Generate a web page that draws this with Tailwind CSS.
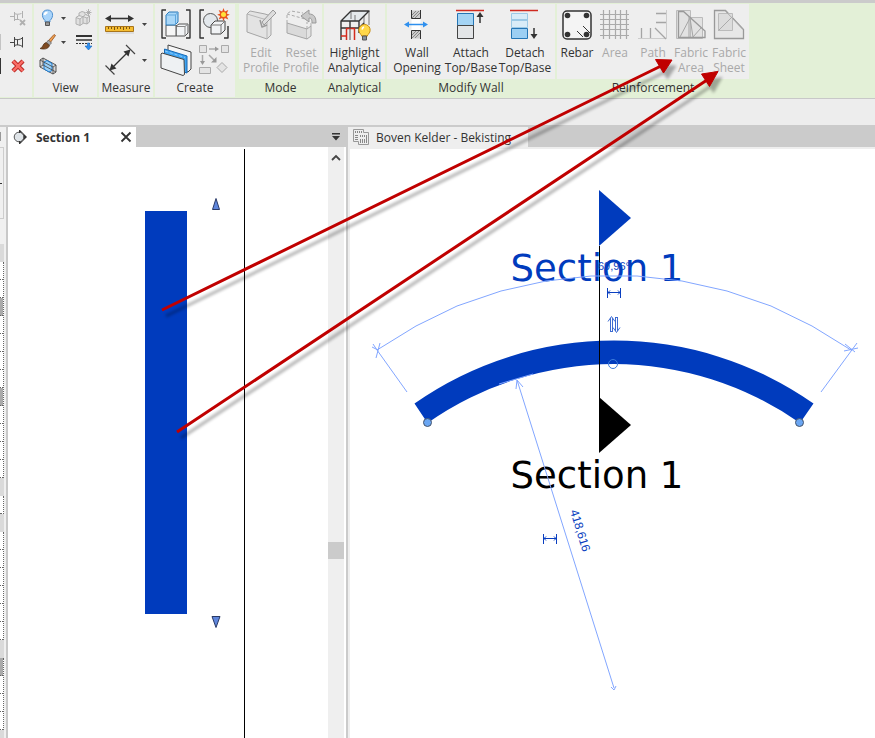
<!DOCTYPE html>
<html lang="en">
<head>
    <meta charset="utf-8">
    <meta name="viewport" content="width=device-width, initial-scale=1">
    <title>Section 1</title>
    <script src="https://cdn.jsdelivr.net/npm/@tailwindcss/browser@4"></script>
</head>
<body class="relative flex min-h-screen flex-col overflow-x-hidden bg-white font-['Open_Sans',sans-serif] text-[12px] leading-[15px] text-[#333]">

    <!-- Ribbon -->
    <header class="flex gap-[2px] overflow-hidden border-t-[3px] border-b border-t-[#cbcbcb] border-b-[#c8c8c8] bg-[#e3f0d7] py-px">

        <!-- Clipboard / pin, cut off on the left -->
        <section class="flex w-8 shrink-0 bg-[#eee] pt-[2px]">
            <div class="flex w-[2px] flex-col pt-7">
                <div class="h-4 w-px bg-[#c4c4c4]"></div>
                <div class="mt-2 h-4 w-px bg-[#333]"></div>
            </div>
            <div class="flex flex-col pl-[8px]">
                <button class="flex h-6 items-center" aria-label="Unpin" disabled>
                    <svg width="17" height="16" viewBox="0 0 17 16" fill="none" stroke="#b0b0b0"><path d="M0 6.500H4M4.500 2v9M4.500 3.500c2 1 4 1 7 0M4.500 9.500h5M12.500 1v7M7.500 4.500v4.500"/><path stroke-width="1.800" d="M10 10l5 5M15 10l-5 5"/></svg>
                </button>
                <button class="flex h-6 items-center" aria-label="Pin">
                    <svg width="16" height="16" viewBox="0 0 16 16" fill="none" stroke="#444"><path d="M0 8.500h4M4.500 3v10M4.500 5c2 1 5 1 8 -1M4.500 11.500c2-1 5-1 8 1M12.500 3v10.500M7.500 6v5"/></svg>
                </button>
                <button class="flex h-6 items-center" aria-label="Delete">
                    <svg width="16" height="16" viewBox="0 0 16 16" fill="none"><path d="M3 3l10 10M13 3L3 13" stroke="#b8231f" stroke-width="4.400"/><path d="M3.200 3.200l9.600 9.600M12.800 3.200l-9.600 9.600" stroke="#fa6d66" stroke-width="2.400"/></svg>
                </button>
            </div>
        </section>

        <section class="flex w-[63px] shrink-0 flex-col bg-[#eee]">
            <div class="flex h-[75px] pt-[2px] pl-[5px]">
                <div class="flex w-9 flex-col">
                    <button class="flex h-6 items-center gap-1" aria-label="Hide in view">
                        <svg width="18" height="18" viewBox="0 0 18 18"><path d="M6 11.500C2 8 2.500 1 8.500 1S15 8 11 11.500v1.500H6z" fill="#a9d4fa" stroke="#4d8fd0"/><path d="M5.500 6c.500-2.500 3-2.500 3-2.500" stroke="#fff" fill="none" stroke-width="2"/><path d="M6.500 13h4v3.500h-4z" fill="#999" stroke="#555"/></svg>
                        <svg width="6" height="3" viewBox="0 0 6 3"><path d="M0 0h5L2.500 3z" fill="#444"/></svg>
                    </button>
                    <button class="flex h-6 items-center gap-1" aria-label="Override graphics">
                        <svg width="18" height="18" viewBox="0 0 18 18"><path d="M9 8l6-6.500 1.500 1L11 10z" fill="#f0a050" stroke="#944f1d" stroke-width=".8"/><path d="M7.500 9.500L9.500 7l3 3-2 2z" fill="#aaa" stroke="#555" stroke-width=".7"/><path d="M1 15.500c3-.500 2.500-5 6-6l3.500 3c-1.500 4-6 4-9.500 3z" fill="#7e4a21" stroke="#482b14" stroke-width=".7"/></svg>
                        <svg width="6" height="3" viewBox="0 0 6 3"><path d="M0 0h5L2.500 3z" fill="#444"/></svg>
                    </button>
                    <button class="flex h-6 items-center" aria-label="Selection box">
                        <svg width="18" height="18" viewBox="0 0 18 18"><path d="M1 3l3-2 13 7v7l-3 2L1 10z" fill="#d9d9d9" stroke="#555"/><path d="M5 5l3-1.500 5 3v7l-3 1.500-5-3z" fill="#9ad0f7" stroke="#1d7ad0"/><path d="M1 3l13 7v7M14 10l3-2M4 1v7l-3 2M4 8l13 7" fill="none" stroke="#444" stroke-width=".8"/></svg>
                    </button>
                </div>
                <div class="flex flex-col">
                    <button class="flex h-6 items-center" aria-label="Displace elements" disabled>
                        <svg width="18" height="18" viewBox="0 0 18 18" fill="#e0e0e0" stroke="#aaa" stroke-width=".9"><path d="M1 8.500l3-2 4 1v7l-3 2-4-1.500zM1 8.500l4 1.500 3-2.500M5 10v6.500M8 7.500l2.500-2 4 1.500v6L12 15l-4-1M8 7.500l4 1.500 2.500-2M12 9v6M4 6.500V4l3-1.500 3 1v2"/><path d="M13.500 0v7M10.500 3.500h6M11.500 1.500l4 4M15.500 1.500l-4 4"/></svg>
                    </button>
                    <button class="flex h-6 items-center" aria-label="Linework">
                        <svg width="18" height="18" viewBox="0 0 18 18" fill="none"><path d="M1 3h16" stroke="#333" stroke-width="2"/><path d="M1 7h16" stroke="#333" stroke-width="1.500"/><path d="M1 10.500h16" stroke="#333" stroke-dasharray="2 1"/><path d="M12.500 10h2v3h2.500l-3.500 4-3.500-4h2.500z" fill="#2d8ff0" stroke="#1563b8" stroke-width=".6"/></svg>
                    </button>
                </div>
            </div>
            <h2 class="h-[18px] text-center leading-[18px]">View</h2>
        </section>

        <section class="flex w-[54px] shrink-0 flex-col bg-[#eee]">
            <div class="flex h-[75px] flex-col pt-[2px] pl-[5px]">
                <button class="flex h-9 items-center gap-[6px]" aria-label="Measure">
                    <svg width="32" height="32" viewBox="0 0 32 32"><path d="M5 10.500h22" stroke="#333" stroke-width="1.600"/><path d="M1 10.500l6-3.500v7zM30 10.500L24 7v7z" fill="#333"/><path d="M1.500 18.500h28v5h-28z" fill="#f5bd31" stroke="#a8741a"/><path d="M4.500 19v2M7.500 19v2M10.500 19v3M13.500 19v2M16.500 19v2M19.500 19v3M22.500 19v2M25.500 19v2" stroke="#7d5510"/><path d="M2 25h28" stroke="#ccc"/></svg>
                    <svg width="6" height="3" viewBox="0 0 6 3"><path d="M0 0h5L2.500 3z" fill="#444"/></svg>
                </button>
                <button class="flex h-9 items-center gap-[6px]" aria-label="Dimension">
                    <svg width="32" height="32" viewBox="0 0 32 32"><path d="M8 24L25 7" stroke="#333" stroke-width="1.300"/><path d="M5.500 26.500l2-7 5 5zM26.500 5.500l-7 2 5 5z" fill="#333"/><path d="M1.500 21.500l9 9M22 1l9 9" stroke="#444" stroke-width="1.200"/></svg>
                    <svg width="6" height="3" viewBox="0 0 6 3"><path d="M0 0h5L2.500 3z" fill="#444"/></svg>
                </button>
            </div>
            <h2 class="h-[18px] text-center leading-[18px]">Measure</h2>
        </section>

        <section class="mr-[2px] flex w-20 shrink-0 flex-col bg-[#eee]">
            <div class="grid h-[75px] grid-cols-[38px_32px] grid-rows-[36px_36px] items-center pt-[2px] pl-[5px]">
                <button aria-label="Create assembly">
                    <svg width="32" height="32" viewBox="0 0 32 32" stroke-linejoin="round"><path d="M6 2H2v28h4M26 2h4v28h-4" fill="none" stroke="#333" stroke-width="1.400"/><path d="M16 18l3-2h9v9l-3 3h-9z" fill="#f2f4f6" stroke="#555"/><path d="M16 18.500h9v9M25 18.500l3-2.500" fill="none" stroke="#888"/><path d="M6 17h10v11H6z" fill="#f6f6f6" stroke="#555"/><path d="M6 7l3-3h9v10l-3 3H6z" fill="#a9d7f8" stroke="#2978b8"/><path d="M6 7h9.500v10M15.500 7L18 4" fill="none" stroke="#5ea6dc"/></svg>
                </button>
                <button aria-label="Create group">
                    <svg width="32" height="32" viewBox="0 0 32 32" stroke-linejoin="round"><path d="M6 2H2v28h4M30 18v12h-4" fill="none" stroke="#333" stroke-width="1.400"/><circle cx="12.500" cy="12.500" r="7" fill="#e3e8ec" stroke="#555"/><path d="M13 17l4-4h10v9l-4 4H13z" fill="#f0f2f4" stroke="#444"/><path d="M13 17h10v9M23 17l4-4" fill="none" stroke="#777"/><path d="M25.500 0l1.300 3.500 3.500-1.500-1.500 3.500 3 1.200-3 1.300 1.500 3.500-3.500-1.500-1.300 3-1.300-3-3.500 1.500 1.500-3.500-3-1.300 3-1.200L20.700 2l3.500 1.500z" fill="#e8531d"/><circle cx="25.500" cy="6.500" r="2.500" fill="#ffe13b"/></svg>
                </button>
                <button aria-label="Create parts">
                    <svg width="32" height="32" viewBox="0 0 32 32" stroke-linejoin="round"><path d="M8 1l23 7v17l-3 3L8 20z" fill="#f6f6f6" stroke="#444"/><path d="M4.500 5L27 12v17L4.500 22z" fill="#3fa4f1" stroke="#1769b5"/><path d="M1 10l1-1 22 6.500.500 15-1.500 1L1 24z" fill="#eef1f3" stroke="#444"/><path d="M5 7l20 6.500" stroke="#8ccbfa" stroke-dasharray="3 2"/></svg>
                </button>
                <button aria-label="Create similar" disabled>
                    <svg width="32" height="32" viewBox="0 0 32 32" fill="#e4e4e4" stroke="#aaa"><path d="M1.500 1.500h7v7h-7zM23.500 1.500h7v7h-7zM1.500 23.500h11v6h-11zM19 23.500l5-5 5 5-5 5z"/><path d="M11 5h8M4.500 11v8M11 11l5 5" stroke-width="1.500"/><path d="M17 2.500l4 2.500-4 2.500zM2 17h5l-2.500 4zM18.500 13v5.500H13z" fill="#999" stroke="none"/></svg>
                </button>
            </div>
            <h2 class="h-[18px] text-center leading-[18px]">Create</h2>
        </section>

        <!-- Contextual panels -->
        <section class="flex w-[83px] shrink-0 flex-col">
            <div class="flex h-[75px] bg-[#eee] pl-[2px] text-[#a9a9a9]">
                <button class="flex w-10 flex-col items-center gap-1 pt-[5px]" disabled>
                    <svg class="shrink-0" width="32" height="32" viewBox="0 0 32 32" stroke-linejoin="round"><path d="M2 5l3-3 15 3 6 2v19l-4 4L2 23z" fill="#e3e3e3" stroke="#a5a5a5"/><path d="M2 5l20 6v19M22 11l4-4" fill="none" stroke="#b5b5b5"/><path d="M17 13L28 1l3 3-12 12z" fill="#ddd" stroke="#999"/><path d="M15 11l2 7 5-2" fill="none" stroke="#999" stroke-width="1.500"/></svg>
                    <span>Edit<br>Profile</span>
                </button>
                <button class="flex w-10 flex-col items-center gap-1 pt-[5px]" disabled>
                    <svg class="shrink-0" width="32" height="32" viewBox="0 0 32 32" stroke-linejoin="round"><path d="M2 14l20 6v10L2 24z" fill="#dadada" stroke="#a5a5a5"/><path d="M22 20l4-3v10l-4 3" fill="#e3e3e3" stroke="#a5a5a5"/><path d="M2 14V5l4-3 12 2M2 5l18 5M22 20v-7M26 17v-3" fill="none" stroke="#aaa" stroke-dasharray="3 2"/><path d="M16 7l8-6v4c5 0 7 3 7 9h-4c0-4-1-5-3-5v4z" fill="#c9c9c9" stroke="#999"/></svg>
                    <span>Reset<br>Profile</span>
                </button>
            </div>
            <h2 class="h-[18px] text-center leading-[18px]">Mode</h2>
        </section>

        <section class="flex w-[61px] shrink-0 flex-col">
            <div class="flex h-[75px] justify-center bg-[#eee]">
                <button class="flex w-[60px] flex-col items-center gap-1 pt-[5px]">
                    <svg class="shrink-0" width="32" height="32" viewBox="0 0 32 32" stroke-linejoin="round"><path d="M2 12L12 2h18L20 12z" fill="#e4e9ec"/><path d="M12 2v8M30 2v14M16 6v6M25 7v8" fill="none" stroke="#777"/><path d="M2 31V12L12 2h18L20 12v12M2 12h18M2 19h18M11 12v7M20 12v7l5-5" fill="none" stroke="#333" stroke-width="1.400"/><path d="M7.500 31V19.500M15.500 31V19.500M2 27h5M7 19.500h9" fill="none" stroke="#d32b1e" stroke-width="1.500"/><path d="M11 19v12" stroke="#555"/><path d="M22.500 26c-4.500-3-3-10.500 3-10.500s7.500 7.500 3 10.500v1h-6z" fill="#ffd84a" stroke="#c78d11"/><path d="M23.500 27h4v4h-4z" fill="#8a949c" stroke="#555"/><path d="M23 20.500c.500-2 2-2.500 2-2.500" fill="none" stroke="#fff" stroke-width="1.500"/></svg>
                    <span>Highlight<br>Analytical</span>
                </button>
            </div>
            <h2 class="h-[18px] text-center leading-[18px]">Analytical</h2>
        </section>

        <section class="flex w-[168px] shrink-0 flex-col">
            <div class="flex h-[75px] justify-center bg-[#eee]">
                <button class="flex w-[54px] flex-col items-center gap-1 pt-[5px]">
                    <svg class="shrink-0" width="32" height="32" viewBox="0 0 32 32"><path d="M10.500 1.500h9v8h-9zM10.500 21.500h9v8h-9z" fill="#ccc"/><path d="M11 6l4-4M11 9l7-7M14 9l5-5M11 26l4-4M11 29l7-7M14 29l5-5" stroke="#888"/><path d="M10.500 10h9v11h-9z" fill="#fff"/><path d="M10.500 1v8.500h9V1M10.500 30v-8.500h9V30" fill="none" stroke="#333"/><path d="M6 15.500h18" stroke="#2f90ee" stroke-width="1.500"/><path d="M3 15.500l5-3v6zM27 15.500l-5-3v6z" fill="#2f90ee"/></svg>
                    <span>Wall<br>Opening</span>
                </button>
                <button class="flex w-[54px] flex-col items-center gap-1 pt-[5px]">
                    <svg class="shrink-0" width="32" height="32" viewBox="0 0 32 32"><path d="M1 1.500h28" stroke="#cf2a20" stroke-width="1.500"/><path d="M2.500 4.500h16v12h-16z" fill="#a4d4f5" stroke="#2475b5"/><path d="M2.500 16.500h16v13h-16z" fill="#e3e5e7" stroke="#444"/><path d="M25 14V6" stroke="#333" stroke-width="1.500"/><path d="M21.500 8L25 3l3.500 5z" fill="#333"/></svg>
                    <span>Attach<br>Top/Base</span>
                </button>
                <button class="flex w-[54px] flex-col items-center gap-1 pt-[5px]">
                    <svg class="shrink-0" width="32" height="32" viewBox="0 0 32 32"><path d="M1 1.500h28" stroke="#cf2a20" stroke-width="1.500"/><path d="M2.500 4.500h16v7h-16zM2.500 10.500h16v8h-16z" fill="#d9ecf8" stroke="#9cc9e6"/><path d="M2.500 19.500h16v10h-16z" fill="#9ccff3" stroke="#2475b5"/><path d="M25 19v8" stroke="#333" stroke-width="1.500"/><path d="M21.500 25l3.500 5 3.500-5z" fill="#333"/></svg>
                    <span>Detach<br>Top/Base</span>
                </button>
            </div>
            <h2 class="h-[18px] text-center leading-[18px]">Modify Wall</h2>
        </section>

        <section class="flex w-[192px] shrink-0 flex-col">
            <div class="flex h-[75px] justify-center bg-[#eee] text-[#a9a9a9]">
                <button class="flex w-[38px] flex-col items-center gap-1 pt-[5px] text-[#333]">
                    <svg class="shrink-0" width="32" height="32" viewBox="0 0 32 32"><rect x="2" y="2" width="28" height="28" rx="4" fill="#f4f4f4" stroke="#333" stroke-width="1.500"/><g fill="#333"><circle cx="6.500" cy="6.500" r="2.800"/><circle cx="25.500" cy="6.500" r="2.800"/><circle cx="6.500" cy="25.500" r="2.800"/><circle cx="25.500" cy="25.500" r="2.800"/></g><path d="M16 22l6 6M22 17l7 7" stroke="#333"/></svg>
                    <span>Rebar</span>
                </button>
                <button class="flex w-[38px] flex-col items-center gap-1 pt-[5px]" disabled>
                    <svg class="shrink-0" width="32" height="32" viewBox="0 0 32 32" stroke="#aaa" stroke-width="1.200"><path d="M4.500 1v29M10.500 1v29M16.500 1v29M21.500 1v29M27.500 1v29M1 5.500h29M1 10.500h29M1 15.500h29M1 20.500h29M1 26.500h29"/></svg>
                    <span>Area</span>
                </button>
                <button class="flex w-[38px] flex-col items-center gap-1 pt-[5px]" disabled>
                    <svg class="shrink-0" width="32" height="32" viewBox="0 0 32 32" fill="none"><path d="M1 29.500h28.500V1" stroke="#ccc"/><path d="M4.500 29V19M13.500 29V19M29 4.500H19M29 13.500H19M18 19l11 11" stroke="#a5a5a5" stroke-width="1.300"/></svg>
                    <span>Path</span>
                </button>
                <button class="flex w-[38px] flex-col items-center gap-1 pt-[5px]" disabled>
                    <svg class="shrink-0" width="32" height="32" viewBox="0 0 32 32" fill="none"><path d="M1.500 1.500h14v28h-14zM15.500 8.500h12v21h-12z" fill="#e2e2e2" stroke="#bbb"/><path d="M3.500 28.500V2.500h5L30 22v6.500z" stroke="#999" stroke-width="1.300"/><path d="M5 28L15 9l3 19M14 8v20M18 28l8-9" stroke="#a5a5a5"/></svg>
                    <span>Fabric<br>Area</span>
                </button>
                <button class="flex w-[38px] flex-col items-center gap-1 pt-[5px]" disabled>
                    <svg class="shrink-0" width="32" height="32" viewBox="0 0 32 32" fill="none"><path d="M1.500 29.500v-28h11l18 19v9z" fill="#e7e7e7" stroke="#999" stroke-width="1.300"/><path d="M5.500 4.500h14v17h-14z" fill="#dcdcdc" stroke="#bbb"/><path d="M5.500 21.500l14-14M12 1.500l18 19" stroke="#aaa"/></svg>
                    <span>Fabric<br>Sheet</span>
                </button>
            </div>
            <h2 class="h-[18px] text-center leading-[18px]">Reinforcement</h2>
        </section>
    </header>

    <!-- Options bar -->
    <div class="h-[26px] shrink-0 bg-[#ededed]"></div>

    <main class="flex flex-1 border-t-2 border-[#cbcbcb]">

        <!-- Properties palette, only its right edge is on screen -->
        <aside class="flex w-2 shrink-0 flex-col border-r-2 border-[#c8c8c8] bg-[#f0f0f0]">
            <div class="h-5 pt-[5px]"><div class="h-[9px] w-px bg-[#999]"></div></div>
            <div class="flex h-[72px] w-1 items-center border-y border-r border-[#cdcdcd]"><span class="h-px w-[2px] bg-[#333]"></span></div>
            <div class="h-[25px]"></div>
            <div class="h-[18px] w-1 bg-[#dadada]"></div>
            <div class="flex w-1 flex-col border-r border-dotted border-[#666] bg-white">
                <div class="h-[18px] border-b border-dotted border-[#666]"></div>
                <div class="h-[18px] border-b border-dotted border-[#666]"></div>
                <div class="h-[18px] border-b border-dotted border-[#666] bg-[#aaa]"></div>
                <div class="h-[18px] border-b border-dotted border-[#666]"></div>
                <div class="h-[18px] border-b border-dotted border-[#666]"></div>
                <div class="h-[18px] border-b border-dotted border-[#666]"></div>
                <div class="h-[18px] border-b border-dotted border-[#666]"></div>
                <div class="h-[18px] border-b border-dotted border-[#666] bg-[#aaa]"></div>
                <div class="h-[18px] border-b border-dotted border-[#666]"></div>
                <div class="h-[18px] border-b border-dotted border-[#666]"></div>
                <div class="h-[18px] border-b border-dotted border-[#666]"></div>
                <div class="h-[18px] border-b border-dotted border-[#666]"></div>
            </div>
            <div class="h-[18px] w-1 bg-[#dadada]"></div>
            <div class="h-[18px] w-1 border-r border-b border-dotted border-[#666] bg-white"></div>
            <div class="h-[18px] w-1 bg-[#dadada]"></div>
            <div class="flex w-1 flex-col border-r border-dotted border-[#666] bg-white">
                <div class="h-[18px] border-b border-dotted border-[#666]"></div>
                <div class="h-[18px] border-b border-dotted border-[#666]"></div>
                <div class="h-[18px] border-b border-dotted border-[#666]"></div>
                <div class="h-[18px] border-b border-dotted border-[#666]"></div>
                <div class="h-[18px] border-b border-dotted border-[#666]"></div>
                <div class="h-[18px] border-b border-dotted border-[#666]"></div>
            </div>
            <div class="h-[18px] w-1 bg-[#dadada]"></div>
            <div class="flex w-1 flex-col border-r border-dotted border-[#666] bg-white">
                <div class="h-[18px] border-b border-dotted border-[#666] bg-[#aaa]"></div>
                <div class="h-[18px] border-b border-dotted border-[#666]"></div>
                <div class="h-[18px] border-b border-dotted border-[#666]"></div>
                <div class="h-[18px] border-b border-dotted border-[#666]"></div>
            </div>
            <div class="w-1 flex-1 bg-[#dadada]"></div>
        </aside>

        <!-- Section view -->
        <section class="flex w-[338px] shrink-0 flex-col">
            <div class="flex h-5 items-center justify-between bg-[#cbcbcb] pr-[5px]">
                <div class="flex h-5 w-32 items-center bg-white pr-1 pl-[5px]">
                    <svg width="16" height="16" viewBox="0 0 16 16"><path d="M7 1l7 7-7 7z" fill="#333"/><circle cx="6" cy="8" r="4.800" fill="#dfe4e8" stroke="#555"/><path d="M6.500 1v3M6.500 12v3" stroke="#333"/></svg>
                    <span class="flex-1 pl-[7px] text-[12px] font-bold">Section 1</span>
                    <button class="flex size-3 items-center justify-center" aria-label="Close tab">
                        <svg width="12" height="12" viewBox="0 0 12 12" stroke="#333" stroke-width="1.800"><path d="M1.500 1.500l9 9M10.500 1.500l-9 9"/></svg>
                    </button>
                </div>
                <button aria-label="List of tabs">
                    <svg width="10" height="8" viewBox="0 0 10 8" fill="#333"><path d="M1 0h8v1.500H1zM1 3h8L5 7.500z"/></svg>
                </button>
            </div>
            <div class="flex flex-1">
                <svg class="h-full min-w-0 flex-1" role="img" aria-label="Section 1">
                    <path d="M137 64h42v403h-42z" fill="#003bbd"/>
                    <path d="M236.500 2v2000" stroke="#000"/>
                    <g fill="#5f86dc" stroke="#2a3a66"><path d="M208 51.500l3.500 11h-7z"/><path d="M204 469.500h8l-4 11z"/></g>
                </svg>
                <div class="flex w-4 flex-col items-center bg-[#efefef] pt-[7px]">
                    <button aria-label="Scroll up">
                        <svg width="10" height="7" viewBox="0 0 10 7" fill="none" stroke="#444" stroke-width="1.800"><path d="M1 6l4-4 4 4"/></svg>
                    </button>
                    <div class="mt-[381px] h-[17px] w-4 bg-[#cbcbcb]"></div>
                </div>
                <div class="w-[2px] bg-white"></div>
            </div>
        </section>

        <!-- Plan view -->
        <section class="flex min-w-0 flex-1 flex-col border-l-2 border-[#cbcbcb]">
            <div class="flex h-5 bg-[#cbcbcb]">
                <div class="flex h-5 w-[180px] items-center gap-[7px] bg-[#eee] pl-[5px]">
                    <svg width="16" height="16" viewBox="0 0 16 16" fill="none"><path d="M.5.5h10v3h5v12h-10v-3h-5z" fill="#eee" stroke="#999"/><path d="M2.500 2v2M4.500 2v2M6.500 2v2M8.500 2v2M2 6.500h3M2 8.500h3M2 10.500h3M7.500 6v2M9.500 6v2M11.500 6v2M13.500 6v8M7.500 10v4M9.500 10v4M11.500 10v4" stroke="#888"/></svg>
                    <span>Boven Kelder - Bekisting</span>
                </div>
            </div>
            <div class="flex flex-1 border-t-2 border-l-2 border-[#eee]">
                <svg class="h-full w-full" role="img" aria-label="Boven Kelder - Bekisting">
                    <!-- drawing origin sits at the view's centre of curvature -->
                    <g transform="translate(264 539)">
                        <g font-family="DejaVu Sans, sans-serif" font-size="37" text-anchor="middle">
                            <text x="-17" y="-407" fill="#003bbd">Section 1</text>
                            <text x="-17" y="-200" fill="#000">Section 1</text>
                        </g>
                        <path d="M-199.500 -284.500A347.500 347.500 0 0 1 199.500 -284.500L186 -265A324 324 0 0 0 -186.500 -265z" fill="#003bbd"/>
                        <path d="M-15 -498L17 -470L-15 -442z" fill="#003bbd"/>
                        <path d="M-15 -291L17 -263L-15 -235z" fill="#000"/>
                        <path d="M-14.500 -442V-290" stroke="#000"/>
                        <g fill="none" stroke="#82a6ff">
                            <path d="M-237 -338L-198 -362L-157 -382L-113 -397L-68 -407L-23 -412H23L68 -407L113 -397L157 -382L198 -362L237 -338"/>
                            <path d="M-241 -344L-237 -338L-207 -296M-234 -345L-238 -330M-242 -341L-236 -338M243 -345L207 -296M230 -337L244 -340M231 -344L241 -336"/>
                            <path d="M0 0L-97 -308M-98 -299L-97 -308L-91 -301M-115 -304L-81 -314M-3 -1L0 2L2 -2"/>
                        </g>
                        <g fill="none" stroke="#0a3fc0">
                            <path d="M-6.500 -400V-390M6.500 -400V-390M-6 -395.500H6M-4 -397.500L-6 -395.500L-4 -393.500M4 -397.500L6 -395.500L4 -393.500"/>
                            <path d="M-70.500 -154V-144M-57.500 -154V-144M-70 -149.500H-58M-68 -151.500L-70 -149.500L-68 -147.500M-60 -151.500L-58 -149.500L-60 -147.500"/>
                        </g>
                        <g fill="none" stroke="#3d6bd2">
                            <path d="M-3.500 -356V-370M-1.500 -356V-370M-3.500 -356.500H-1.500M-6 -366.500L-2.500 -371.500L1 -366.500"/>
                            <path d="M1.500 -371V-357M3.500 -371V-357M1.500 -370.500H3.500M-1 -360.500L2.500 -355.500L6 -360.500"/>
                        </g>
                        <circle cx="-1" cy="-324" r="4.500" fill="none" stroke="#3b7bdc"/>
                        <g fill="#6aa6f3" stroke="#44546c"><circle cx="-186.500" cy="-265.500" r="4"/><circle cx="185.500" cy="-265.500" r="4"/></g>
                        <g font-family="Liberation Sans, Arial, sans-serif" fill="#0a3fc0">
                            <text x="-16" y="-418" font-size="11">69,96°</text>
                            <text transform="translate(-44 -177) rotate(73)" font-size="12">418,616</text>
                        </g>
                    </g>
                </svg>
            </div>
        </section>
    </main>

    <!-- Markup arrows over the whole window -->
    <svg class="pointer-events-none absolute top-0 left-0 h-full w-full" aria-hidden="true">
        <defs>
            <filter id="soft" x="-10%" y="-10%" width="120%" height="120%"><feGaussianBlur stdDeviation="1.500"/></filter>
            <g id="arrows">
                <path d="M162 310L661 66M177 432L707 80" stroke-width="3"/>
                <path d="M672 60L655.500 59.500L663.500 73zM718 71.500L701.500 74L709.500 86.500z"/>
            </g>
        </defs>
        <use href="#arrows" transform="translate(4 6)" fill="#000" stroke="#000" opacity=".3" filter="url(#soft)"/>
        <use href="#arrows" fill="#c00000" stroke="#c00000"/>
    </svg>
</body>
</html>
